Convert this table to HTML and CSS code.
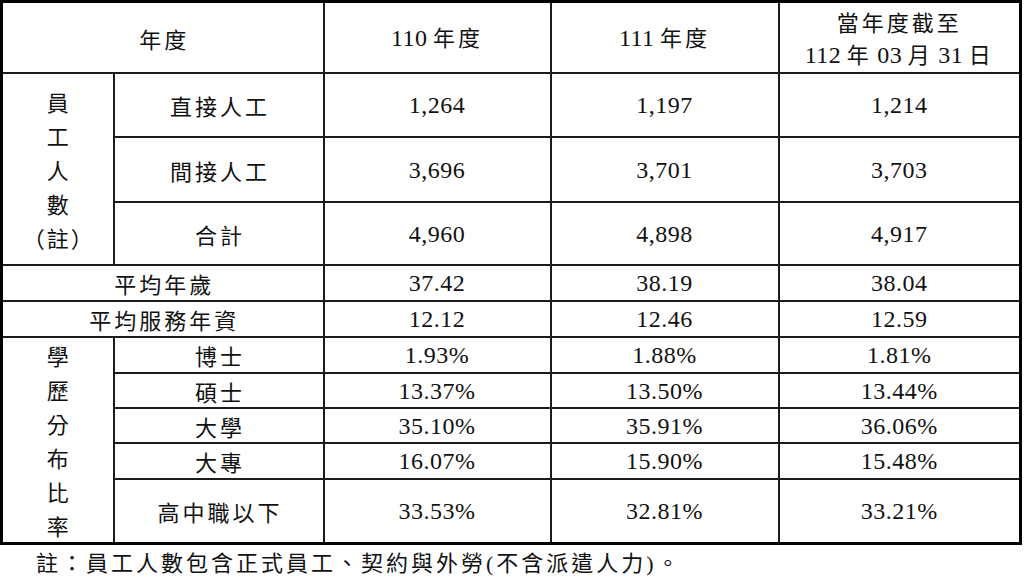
FILE: index.html
```html
<!DOCTYPE html>
<html lang="zh-Hant">
<head>
<meta charset="utf-8">
<title>員工資料</title>
<link rel="stylesheet" href="styles.css">
</head>
<body>
<table class="staff">
  <colgroup>
    <col class="c1"><col class="c2"><col class="c3"><col class="c4"><col class="c5">
  </colgroup>
  <tr class="h-head">
    <th colspan="2" class="lbl">年度</th>
    <th><span class="num">110</span> <span class="lbl">年度</span></th>
    <th><span class="num">111</span> <span class="lbl">年度</span></th>
    <th class="two">
      <div class="lbl">當年度截至</div>
      <div><span class="num">112</span> <span class="lbl">年</span> <span class="num">03</span> <span class="lbl">月</span> <span class="num">31</span> <span class="lbl">日</span></div>
    </th>
  </tr>
  <tr class="h-tall">
    <td rowspan="3" class="vert-cell">
      <div class="vert"><span>員</span><span>工</span><span>人</span><span>數</span><span class="paren">（註）</span></div>
    </td>
    <td class="lbl">直接人工</td>
    <td class="num">1,264</td>
    <td class="num">1,197</td>
    <td class="num">1,214</td>
  </tr>
  <tr class="h-tall2">
    <td class="lbl">間接人工</td>
    <td class="num">3,696</td>
    <td class="num">3,701</td>
    <td class="num">3,703</td>
  </tr>
  <tr class="h-tall3">
    <td class="lbl">合計</td>
    <td class="num">4,960</td>
    <td class="num">4,898</td>
    <td class="num">4,917</td>
  </tr>
  <tr class="h-row">
    <td colspan="2" class="lbl">平均年歲</td>
    <td class="num">37.42</td>
    <td class="num">38.19</td>
    <td class="num">38.04</td>
  </tr>
  <tr class="h-row">
    <td colspan="2" class="lbl">平均服務年資</td>
    <td class="num">12.12</td>
    <td class="num">12.46</td>
    <td class="num">12.59</td>
  </tr>
  <tr class="h-row">
    <td rowspan="5" class="vert-cell">
      <div class="vert"><span>學</span><span>歷</span><span>分</span><span>布</span><span>比</span><span>率</span></div>
    </td>
    <td class="lbl">博士</td>
    <td class="num">1.93%</td>
    <td class="num">1.88%</td>
    <td class="num">1.81%</td>
  </tr>
  <tr class="h-row2">
    <td class="lbl">碩士</td>
    <td class="num">13.37%</td>
    <td class="num">13.50%</td>
    <td class="num">13.44%</td>
  </tr>
  <tr class="h-row2">
    <td class="lbl">大學</td>
    <td class="num">35.10%</td>
    <td class="num">35.91%</td>
    <td class="num">36.06%</td>
  </tr>
  <tr class="h-row">
    <td class="lbl">大專</td>
    <td class="num">16.07%</td>
    <td class="num">15.90%</td>
    <td class="num">15.48%</td>
  </tr>
  <tr class="h-tall">
    <td class="lbl">高中職以下</td>
    <td class="num">33.53%</td>
    <td class="num">32.81%</td>
    <td class="num">33.21%</td>
  </tr>
</table>
<p class="note">註：員工人數包含正式員工、契約與外勞(不含派遣人力)。</p>
</body>
</html>
```
FILE: styles.css
```css
html, body {
  margin: 0;
  padding: 0;
  background: #ffffff;
}

body {
  font-family: "Liberation Serif", "Noto Sans CJK TC", serif;
  color: #111111;
}

.staff {
  border-collapse: collapse;
  table-layout: fixed;
  width: 1019px;
  border: 3.5px solid #000000;
}

.c1 { width: 112px; }
.c2 { width: 210px; }
.c3 { width: 227px; }
.c4 { width: 228px; }
.c5 { width: 242px; }

.staff th,
.staff td {
  border: 2px solid #1c1c1c;
  padding: 0;
  text-align: center;
  vertical-align: middle;
  font-weight: normal;
  font-size: 22px;
  line-height: 28px;
}

.h-head { height: 68px; }
.h-tall { height: 64px; }
.h-tall2 { height: 65px; }
.h-tall3 { height: 63px; }
.h-row { height: 36px; }
.h-row2 { height: 35px; }

.lbl {
  font-family: "Noto Sans CJK TC", sans-serif;
  font-size: 22px;
  letter-spacing: 3px;
}

.staff td.lbl,
.staff th.lbl {
  padding-left: 3px;
}

.num,
.staff td.num {
  font-family: "Liberation Serif", serif;
  font-size: 24px;
  letter-spacing: 0.5px;
}

.staff th.two {
  line-height: 32px;
  padding-top: 2px;
}

.vert {
  display: flex;
  flex-direction: column;
  align-items: center;
  font-family: "Noto Sans CJK TC", sans-serif;
  font-size: 22px;
  line-height: 34px;
}

.vert .paren {
  letter-spacing: 2px;
  margin-left: 2px;
}

.note {
  margin: 5px 0 0 0;
  padding-left: 36px;
  font-family: "Liberation Serif", "Noto Sans CJK TC", serif;
  font-size: 22px;
  letter-spacing: 3px;
  line-height: 28px;
}
```
